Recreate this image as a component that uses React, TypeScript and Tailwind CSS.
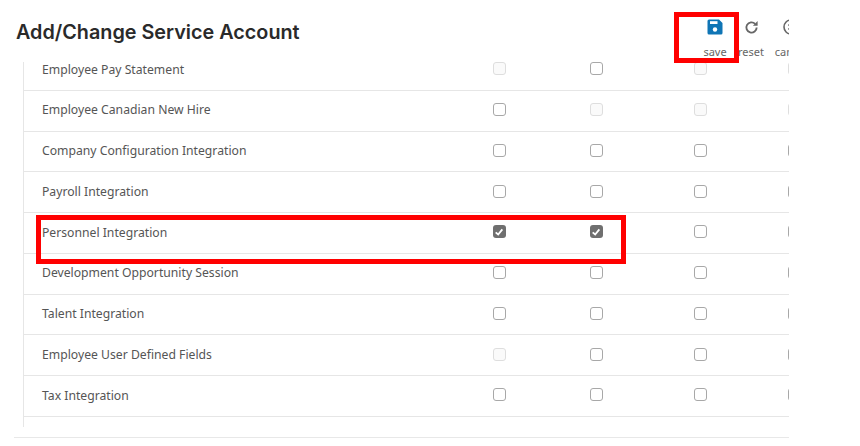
import React from "react";

type S = "on" | "off" | "dis" | "none";

const rows: { name: string; c: [S, S, S, S] }[] = [
  { name: "Employee Pay Statement", c: ["dis", "off", "dis", "dis"] },
  { name: "Employee Canadian New Hire", c: ["off", "dis", "dis", "dis"] },
  { name: "Company Configuration Integration", c: ["off", "off", "off", "off"] },
  { name: "Payroll Integration", c: ["off", "off", "off", "off"] },
  { name: "Personnel Integration", c: ["on", "on", "off", "off"] },
  { name: "Development Opportunity Session", c: ["off", "off", "off", "off"] },
  { name: "Talent Integration", c: ["off", "off", "off", "off"] },
  { name: "Employee User Defined Fields", c: ["dis", "off", "off", "off"] },
  { name: "Tax Integration", c: ["off", "off", "off", "off"] },
];

function Box({ s }: { s: S }) {
  if (s === "on")
    return (
      <span className="flex h-[13px] w-[13px] items-center justify-center rounded-[3px] bg-[#6f6f6f]">
        <svg viewBox="0 0 12 12" className="h-[10px] w-[10px]" fill="none" stroke="#fff" strokeWidth="2.2">
          <path d="M2 6.5 L5 9 L10 2.8" />
        </svg>
      </span>
    );
  if (s === "dis") return <span className="block h-[13px] w-[13px] rounded-[3px] border border-[#dedede] bg-[#fafafa]" />;
  if (s === "none") return null;
  return <span className="block h-[13px] w-[13px] rounded-[3px] border-[1.5px] border-[#a8a8a8] bg-white" />;
}

function Row({ name, c }: { name: string; c: [S, S, S, S] }) {
  return (
    <div className="flex h-[40.75px] items-center border-b border-[#e6e6e6]">
      <div className="w-[450px] shrink-0 pl-[18px] text-[12.2px] text-[#555555]">{name}</div>
      <div className="mb-[2px] flex w-[50px] shrink-0 justify-center"><Box s={c[0]} /></div>
      <div className="mb-[2px] ml-[47px] flex w-[50px] shrink-0 justify-center"><Box s={c[1]} /></div>
      <div className="mb-[2px] ml-[54px] flex w-[50px] shrink-0 justify-center"><Box s={c[2]} /></div>
      <div className="mb-[2px] ml-[44px] flex w-[50px] shrink-0 justify-center"><Box s={c[3]} /></div>
    </div>
  );
}

function Tool({ label, children, className }: { label: string; children: React.ReactNode; className: string }) {
  return (
    <div className={`flex shrink-0 flex-col items-center ${className}`}>
      <div className="flex h-[22px] items-center">{children}</div>
      <div className="mt-[8px] text-[11px] leading-[12px] text-[#666666]">{label}</div>
    </div>
  );
}

export default function App() {
  return (
    <div className="relative h-[446px] w-[860px] overflow-hidden bg-white font-['Noto_Sans',sans-serif]">
      <div className="flex h-[62px] w-[789px] overflow-hidden">
        <h1 className="ml-[16px] mt-[18px] font-['Inter',sans-serif] text-[19.8px] font-semibold leading-[28px] text-[#2a2a2a]">
          Add/Change Service Account
        </h1>
        <div className="ml-auto mr-[-25px] flex pt-[16px]">
          <Tool label="save" className="w-[38px]">
            <svg viewBox="0 0 16 16" className="h-[16px] w-[16px]">
              <path fill="#0f75b5" d="M2 0.5h10l3.5 3.5v10a1.5 1.5 0 0 1-1.5 1.5H2A1.5 1.5 0 0 1 .5 14V2A1.5 1.5 0 0 1 2 .5z" />
              <rect x="3" y="2.2" width="7.5" height="2.8" fill="#fff" />
              <circle cx="8" cy="10.5" r="2.2" fill="#fff" />
            </svg>
          </Tool>
          <Tool label="reset" className="w-[34px]">
            <svg viewBox="0 0 16 16" className="h-[15px] w-[15px]" fill="none" stroke="#666" strokeWidth="2">
              <path d="M13.5 8a5.5 5.5 0 1 1-1.6-3.9" />
              <path d="M14.5 1v5h-5" fill="#666" stroke="none" />
            </svg>
          </Tool>
          <Tool label="cancel" className="w-[46px]">
            <svg viewBox="0 0 16 16" className="h-[16px] w-[16px]" fill="none" stroke="#666" strokeWidth="1.6">
              <circle cx="8" cy="8" r="7" />
              <path d="M5.5 5.5l5 5M10.5 5.5l-5 5" />
            </svg>
          </Tool>
        </div>
      </div>
      <div className="ml-[23px] h-[365px] w-[766px] overflow-hidden border-l border-[#e6e6e6]">
        <div className="mt-[-12px]">
          {rows.map((r) => (
            <Row key={r.name} name={r.name} c={r.c} />
          ))}
        </div>
      </div>
      <div className="ml-[14px] mt-[10px] h-[1px] w-[775px] bg-[#e8e8e8]" />

      <div className="absolute left-[674px] top-[12px] h-[51px] w-[65px] border-[5px] border-[#ff0000]" />
      <div className="absolute left-[36px] top-[215px] h-[49px] w-[590px] border-[5px] border-[#ff0000]" />
    </div>
  );
}
